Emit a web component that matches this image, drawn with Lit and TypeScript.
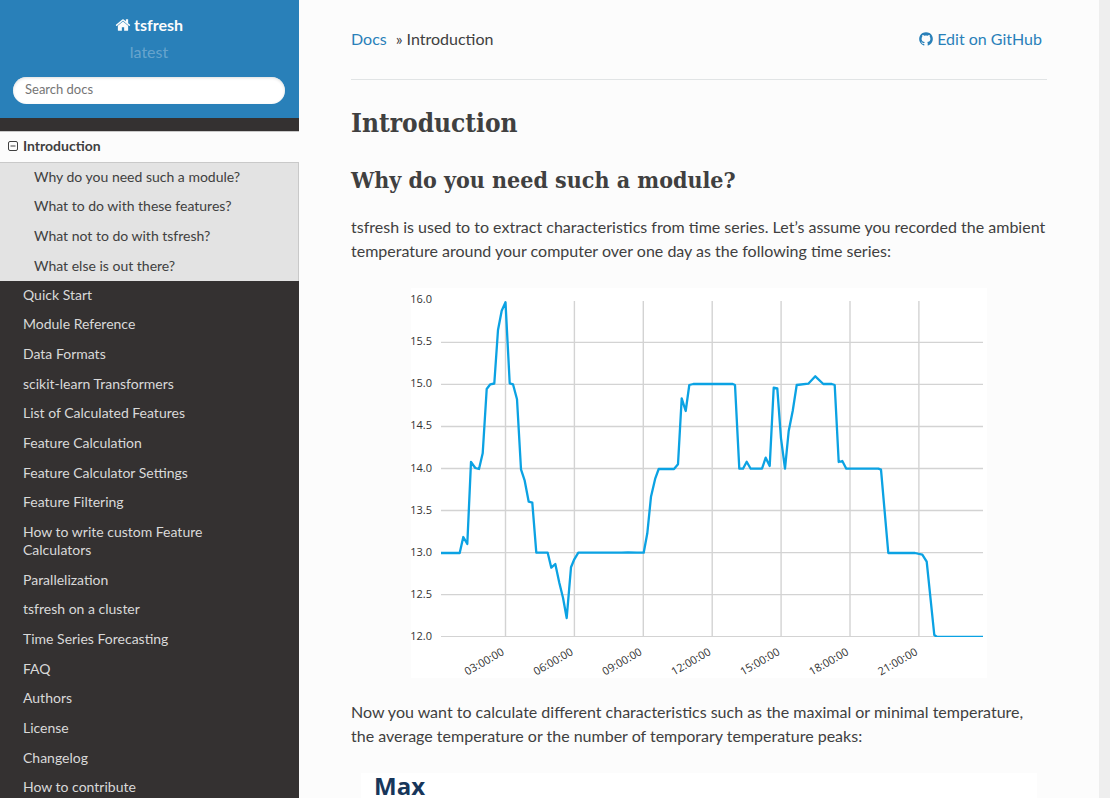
import { LitElement, html, css, svg } from "lit";
import { customElement, property, state } from "lit/decorators.js";

const SECTIONS = [
  "Why do you need such a module?",
  "What to do with these features?",
  "What not to do with tsfresh?",
  "What else is out there?",
];

const PAGES = [
  "Quick Start",
  "Module Reference",
  "Data Formats",
  "scikit-learn Transformers",
  "List of Calculated Features",
  "Feature Calculation",
  "Feature Calculator Settings",
  "Feature Filtering",
  "How to write custom Feature Calculators",
  "Parallelization",
  "tsfresh on a cluster",
  "Time Series Forecasting",
  "FAQ",
  "Authors",
  "License",
  "Changelog",
  "How to contribute",
];

// Temperature curve in drawing units of the chart.
const CURVE: [number, number][] = [
  [30, 265], [48.7, 265], [52.3, 249], [56.3, 256], [60, 174], [64.3, 180], [68, 181],
  [71.7, 165.3], [75.7, 101], [79.3, 96.3], [83.3, 95.5], [87, 42], [90.7, 22.7], [94.5, 14.3],
  [98.7, 95.3], [102, 96.3], [106, 111.3], [110, 181.3], [113.7, 192.7], [117.7, 213.7],
  [121.3, 214.7], [125.3, 264.7], [136.7, 264.7], [140.3, 279.7], [144.3, 276], [148.3, 294.7],
  [152, 309.7], [155.7, 330], [160, 279.3], [163.3, 271.3], [167.3, 264.7], [210.7, 264.7],
  [217, 264.4], [226, 264.7], [232.7, 264.7], [236.3, 245.3], [240, 208.7], [244.3, 190.3],
  [247.7, 181], [263, 181], [267, 176.3], [270.7, 110.3], [274.7, 123], [278.3, 97], [282.3, 96],
  [321.7, 96], [324, 97], [328.3, 180.7], [332, 180.7], [335.7, 173.7], [339.7, 180.7],
  [351, 180.7], [354.7, 169.7], [358.7, 178], [362.7, 99.7], [366.3, 100.3], [370, 150.3],
  [374, 180.7], [377.7, 143], [381.7, 123], [385.7, 97], [397.3, 95.7], [404.3, 88.3],
  [412.3, 96], [420.7, 96], [423.7, 97], [427.7, 174], [431.3, 173], [435.3, 180.7],
  [467.3, 180.7], [470, 181.7], [477.3, 265], [504, 265], [511.3, 266.7], [515.7, 273.7],
  [523.3, 347], [526, 349], [572, 349],
];

const LEVELS = ["16.0", "15.5", "15.0", "14.5", "14.0", "13.5", "13.0", "12.5", "12.0"];
const HOURS = ["03:00:00", "06:00:00", "09:00:00", "12:00:00", "15:00:00", "18:00:00", "21:00:00"];

@customElement("temperature-chart")
export class TemperatureChart extends LitElement {
  static styles = css`
    :host { display: block; }
    svg { display: block; width: 100%; height: auto; background: #fff; }
    .grid { stroke: #d3d3d3; stroke-width: 1.4; }
    .curve { fill: none; stroke: #0ba2e3; stroke-width: 2.3; stroke-linejoin: round; }
    .label { font: 11px "Open Sans", "Noto Sans", sans-serif; fill: #333; text-anchor: end; }
  `;

  render() {
    const y = (i: number) => 12.3 + i * 42.05;
    const x = (i: number) => 94.5 + i * 68.9;
    return html`<svg viewBox="0 0 576 390" role="img" aria-label="Temperature over one day">
      <clipPath id="plot"><rect x="30" y="0" width="543" height="349"></rect></clipPath>
      ${LEVELS.map((t, i) => svg`
        ${i > 0 ? svg`<line class="grid" clip-path="url(#plot)" x1="30" x2="572" y1=${y(i)} y2=${y(i)}></line>` : null}
        <text class="label" x="21" y=${y(i) + 3}>${t}</text>`)}
      ${HOURS.map((t, i) => svg`
        <line class="grid" x1=${x(i)} x2=${x(i)} y1="13" y2="349"></line>
        <text class="label" transform="translate(${x(i) - 0.5} 366) rotate(-30)">${t}</text>`)}
      <polyline class="curve" clip-path="url(#plot)" points=${CURVE.map((p) => p.join(",")).join(" ")}></polyline>
    </svg>`;
  }
}

@customElement("docs-sidebar")
export class DocsSidebar extends LitElement {
  @state() private open = true;

  static styles = css`
    :host { display: block; background: #343131; overflow: hidden; }
    a { color: inherit; text-decoration: none; }
    .head {
      display: flex; flex-direction: column; align-items: center;
      padding: 13px 14px 14px 13px; background: #2980b9; margin-bottom: 13px;
    }
    .brand { display: flex; align-items: center; gap: 3px; color: #fcfcfc; font-weight: 700; line-height: 24px; }
    .brand svg { width: 16px; height: 16px; fill: currentColor; }
    .version { color: rgba(255, 255, 255, 0.3); line-height: 24px; margin: 3px 0 13px; }
    form { align-self: stretch; }
    input {
      display: block; box-sizing: border-box; width: 100%; height: 27px; padding: 0 12px 3px;
      border: 0; border-radius: 50px; background: #fff;
      box-shadow: inset 0 1px 3px #ddd; font: 13px Lato, sans-serif; color: #333; outline: none;
    }
    input::placeholder { color: #757575; opacity: 1; }
    ul { list-style: none; margin: 0; padding: 0; }
    .current {
      display: flex; align-items: center; gap: 5px; padding: 5px 8px 7px; background: #fcfcfc;
      border: solid #c9c9c9; border-width: 1px 0; color: #404040; font-weight: 700;
    }
    .toggle { display: flex; padding: 0; border: 0; background: none; color: #404040; cursor: pointer; }
    .toggle svg { width: 10px; height: 10px; fill: none; stroke: currentColor; }
    nav { font-size: 14px; line-height: 18px; }
    .item { display: block; padding: 5px 60px 6px 23px; margin-bottom: 1px; }
    .sections { background: #e3e3e3; color: #404040; border-right: 1px solid #c9c9c9; }
    .sections .item { padding-left: 34px; padding-right: 20px; }
    .pages { color: #d9d9d9; }
    li:nth-child(3n + 1) .item { margin-bottom: 0; }
  `;

  render() {
    return html`
      <div class="head">
        <a class="brand" href="#">
          <svg viewBox="0 0 1792 1792" aria-hidden="true"><path d="M1472 992v480q0 26-19 45t-45 19h-384v-384h-256v384h-384q-26 0-45-19t-19-45v-480q0-1 .5-3t.5-3l575-474 575 474q1 2 1 6zm223-69l-62 74q-8 9-21 11h-3q-13 0-21-7l-692-577-692 577q-12 8-24 7-13-2-21-11l-62-74q-8-10-7-23.5t11-21.5l719-599q32-26 76-26t76 26l244 204v-195q0-14 9-23t23-9h192q14 0 23 9t9 23v408l219 182q10 8 11 21.5t-7 23.5z"></path></svg>
          tsfresh
        </a>
        <div class="version">latest</div>
        <form role="search" @submit=${(e: Event) => e.preventDefault()}>
          <input type="text" placeholder="Search docs" aria-label="Search docs" />
        </form>
      </div>
      <nav aria-label="Documentation">
        <div class="current">
          <button class="toggle" aria-label="Toggle sections" aria-expanded=${this.open}
            @click=${() => (this.open = !this.open)}>
            <svg viewBox="0 0 10 10"><rect x="0.5" y="0.5" width="9" height="9" rx="1.5"></rect><path d="M2.5 5h5"></path></svg>
          </button>
          <a href="#introduction">Introduction</a>
        </div>
        ${this.open ? html`<ul class="sections">
          ${SECTIONS.map((s) => html`<li><a class="item" href="#section">${s}</a></li>`)}
        </ul>` : null}
        <ul class="pages">
          ${PAGES.map((p) => html`<li><a class="item" href="#page">${p}</a></li>`)}
        </ul>
      </nav>`;
  }
}

@customElement("app-root")
export class AppRoot extends LitElement {
  @property() heading = "Introduction";

  static styles = css`
    :host {
      display: grid; grid-template-columns: 299px minmax(0, 1fr); height: 100vh; overflow: hidden;
      background: #eee; color: #404040; font: 16px/24px Lato, sans-serif;
    }
    a { color: #2980b9; text-decoration: none; }
    main { box-sizing: border-box; max-width: 800px; padding: 27px 52px; background: #fcfcfc; overflow: hidden; }
    .top { display: flex; justify-content: space-between; padding: 0 5px 28px 0; border-bottom: 1px solid #e1e4e5; margin-bottom: 25px; }
    .crumbs { display: flex; gap: 4px; }
    .crumbs a { margin-right: 5px; }
    .edit { display: flex; align-items: center; gap: 3px; }
    .edit svg { width: 16px; height: 16px; fill: currentColor; }
    h1, h2 { margin: 0; font-family: "DejaVu Serif Condensed", "DejaVu Serif", serif; font-weight: 700; }
    h1 { font-size: 26px; line-height: 36px; margin-bottom: 24px; }
    h2 { font-size: 23px; line-height: 30px; margin-bottom: 20px; }
    p { margin: 0 0 25px; }
    .chart { width: 576px; max-width: 100%; margin: 0 auto 22px; }
    .features { margin: 0 10px; padding: 0 13px 24px; background: #fff; color: #17365a; font: 700 24px/26px "Open Sans", sans-serif; }
  `;

  render() {
    return html`
      <docs-sidebar></docs-sidebar>
      <main>
        <div class="top">
          <div class="crumbs"><a href="#">Docs</a><span>»</span><span>${this.heading}</span></div>
          <a class="edit" href="#edit">
            <svg viewBox="0 0 1792 1792" aria-hidden="true"><path d="M896 128q209 0 385.500 103t279.500 279.500 103 385.500q0 251-146.500 451.500t-378.500 277.500q-27 5-40-7t-13-30q0-3 .5-76.500t.5-134.500q0-97-52-142 57-6 102.500-18t94-39 81-66.500 53-105 20.500-150.500q0-119-79-206 37-91-8-204-28-9-81 11t-92 44l-38 24q-93-26-192-26t-192 26q-16-11-42.500-27t-83.500-38.500-85-13.500q-45 113-8 204-79 87-79 206 0 85 20.500 150t52.500 105 80.500 67 94 39 102.500 18q-39 36-49 103-21 10-45 15t-57 5-65.500-21.500-55.500-62.500q-19-32-48.500-52t-49.500-24l-20-3q-21 0-29 4.500t-5 11.500 9 14 13 12l7 5q22 10 43.500 38t31.500 51l10 23q13 38 44 61.500t67 30 69.500 7 55.500-3.500l23-4q0 38 .5 88.500t.5 54.500q0 18-13 30t-40 7q-232-77-378.500-277.500t-146.500-451.500q0-209 103-385.500t279.500-279.500 385.500-103z"></path></svg>
            Edit on GitHub
          </a>
        </div>
        <article>
          <h1>${this.heading}</h1>
          <h2>Why do you need such a module?</h2>
          <p>tsfresh is used to to extract characteristics from time series. Let’s assume you recorded the ambient temperature around your computer over one day as the following time series:</p>
          <temperature-chart class="chart"></temperature-chart>
          <p>Now you want to calculate different characteristics such as the maximal or minimal temperature, the average temperature or the number of temporary temperature peaks:</p>
          <div class="features">Max</div>
        </article>
      </main>`;
  }
}
